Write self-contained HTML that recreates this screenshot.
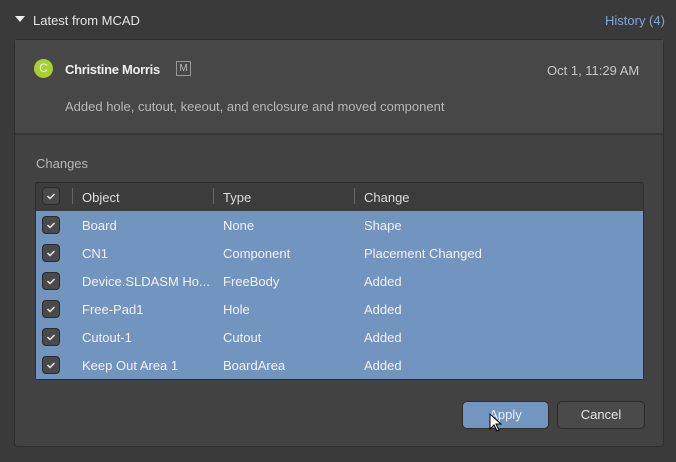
<!DOCTYPE html>
<html><head><style>
body{margin:0;width:676px;height:462px;background:#3a3a3a;font-family:"Liberation Sans",sans-serif;font-size:13px;color:#ddd;position:relative;overflow:hidden}
.a{position:absolute}
.cb{position:absolute;width:18px;height:18px;border:1px solid #2a2a2a;border-radius:4px;background:#4a4a4a;box-sizing:border-box}
.cb svg{position:absolute;left:3px;top:3px}
.row{position:absolute;left:36px;width:607px;height:28px;background:#7295c0;color:#f2f2f2}
.row span{position:absolute;top:7px}
</style></head><body>
<div class="a" style="left:15px;top:16px;width:0;height:0;border-left:5px solid transparent;border-right:5px solid transparent;border-top:6px solid #eee"></div>
<div class="a" style="left:33px;top:13px;color:#e6e6e6">Latest from MCAD</div>
<div class="a" style="left:605px;top:13px;color:#7ea7dc">History (4)</div>
<div class="a" style="left:14px;top:39px;width:650px;height:408px;background:#424242;border:1px solid #2e2e2e;border-radius:4px;box-sizing:border-box"></div>
<div class="a" style="left:15px;top:40px;width:648px;height:93px;background:#474747;border-bottom:2px solid #353535"></div>
<div class="a" style="left:34px;top:59px;width:19px;height:19px;border-radius:50%;background:#a6d12e;color:#eef;font-size:12px;text-align:center;line-height:19px">C</div>
<div class="a" style="left:65px;top:62px;font-weight:bold;color:#eee;letter-spacing:-0.3px">Christine Morris</div>
<div class="a" style="left:176px;top:61px;width:13px;height:13px;border:1px solid #999;font-size:10px;line-height:13px;text-align:center;color:#bbb">M</div>
<div class="a" style="left:547px;top:63px;color:#c8c8c8">Oct 1, 11:29 AM</div>
<div class="a" style="left:65px;top:99px;color:#b8b8b8">Added hole, cutout, keeout, and enclosure and moved component</div>
<div class="a" style="left:36px;top:156px;color:#b8b8b8">Changes</div>
<div class="a" style="left:35px;top:182px;width:609px;height:198px;background:#3c3c3c;border:1px solid #2c2c2c;border-radius:3px;box-sizing:border-box"></div>
<div class="a" style="left:82px;top:190px;color:#ddd">Object</div>
<div class="a" style="left:223px;top:190px;color:#ddd">Type</div>
<div class="a" style="left:364px;top:190px;color:#ddd">Change</div>
<div class="a" style="left:72px;top:188px;width:1px;height:16px;background:#666"></div>
<div class="a" style="left:213px;top:188px;width:1px;height:16px;background:#666"></div>
<div class="a" style="left:354px;top:188px;width:1px;height:16px;background:#666"></div>
<div class="cb" style="left:42px;top:187px"><svg width="10" height="10"><path d="M1.5 5l2.5 2.5L8.5 3" stroke="#eee" stroke-width="1.4" fill="none"/></svg></div>
<div class="row" style="top:211px"><span style="left:46px">Board</span><span style="left:187px">None</span><span style="left:328px">Shape</span></div>
<div class="row" style="top:239px"><span style="left:46px">CN1</span><span style="left:187px">Component</span><span style="left:328px">Placement Changed</span></div>
<div class="row" style="top:267px"><span style="left:46px">Device.SLDASM Ho...</span><span style="left:187px">FreeBody</span><span style="left:328px">Added</span></div>
<div class="row" style="top:295px"><span style="left:46px">Free-Pad1</span><span style="left:187px">Hole</span><span style="left:328px">Added</span></div>
<div class="row" style="top:323px"><span style="left:46px">Cutout-1</span><span style="left:187px">Cutout</span><span style="left:328px">Added</span></div>
<div class="row" style="top:351px;height:28px"><span style="left:46px">Keep Out Area 1</span><span style="left:187px">BoardArea</span><span style="left:328px">Added</span></div>
<div class="cb" style="left:42px;top:216px"><svg width="10" height="10"><path d="M1.5 5l2.5 2.5L8.5 3" stroke="#eee" stroke-width="1.4" fill="none"/></svg></div>
<div class="cb" style="left:42px;top:244px"><svg width="10" height="10"><path d="M1.5 5l2.5 2.5L8.5 3" stroke="#eee" stroke-width="1.4" fill="none"/></svg></div>
<div class="cb" style="left:42px;top:272px"><svg width="10" height="10"><path d="M1.5 5l2.5 2.5L8.5 3" stroke="#eee" stroke-width="1.4" fill="none"/></svg></div>
<div class="cb" style="left:42px;top:300px"><svg width="10" height="10"><path d="M1.5 5l2.5 2.5L8.5 3" stroke="#eee" stroke-width="1.4" fill="none"/></svg></div>
<div class="cb" style="left:42px;top:328px"><svg width="10" height="10"><path d="M1.5 5l2.5 2.5L8.5 3" stroke="#eee" stroke-width="1.4" fill="none"/></svg></div>
<div class="cb" style="left:42px;top:356px"><svg width="10" height="10"><path d="M1.5 5l2.5 2.5L8.5 3" stroke="#eee" stroke-width="1.4" fill="none"/></svg></div>
<div class="a" style="left:462px;top:401px;width:87px;height:28px;background:#7396c0;border:1px solid #2e2e2e;border-radius:5px;box-sizing:border-box;text-align:center;line-height:26px;color:#e8eef6">Apply</div>
<div class="a" style="left:557px;top:401px;width:88px;height:28px;background:#4a4a4a;border:1px solid #2a2a2a;border-radius:5px;box-sizing:border-box;text-align:center;line-height:26px;color:#e6e6e6">Cancel</div>
<svg class="a" style="left:489px;top:413px" width="14" height="20"><path d="M1 1v15l4-4 3 6 2-1-3-6h5z" fill="#fff" stroke="#000" stroke-width="1"/></svg>
</body></html>
